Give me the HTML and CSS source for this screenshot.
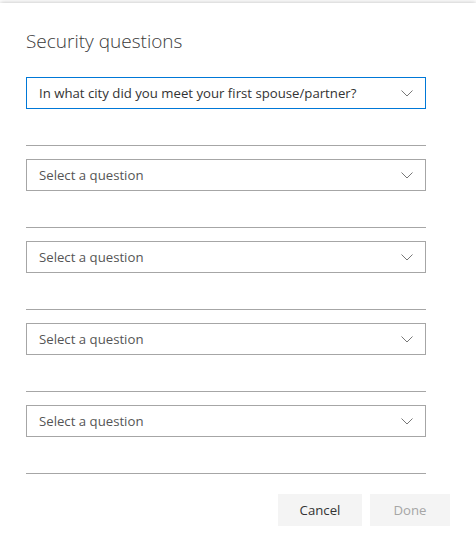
FILE: index.html
```html
<!DOCTYPE html>
<html>
<head>
<meta charset="utf-8">
<link rel="stylesheet" href="styles.css">
</head>
<body>
<div class="dialog">
  <h1 class="title">Security questions</h1>
  <div class="questions">
    <div class="q">
      <div class="select focused">
        <span class="label filled">In what city did you meet your first spouse/partner?</span>
        <svg class="chev" width="12" height="7" viewBox="0 0 12 7"><path d="M0.5 0.5 L6 6 L11.5 0.5" fill="none" stroke="#777" stroke-width="1"/></svg>
      </div>
      <div class="answer"></div>
    </div>
    <div class="q">
      <div class="select">
        <span class="label">Select a question</span>
        <svg class="chev" width="12" height="7" viewBox="0 0 12 7"><path d="M0.5 0.5 L6 6 L11.5 0.5" fill="none" stroke="#777" stroke-width="1"/></svg>
      </div>
      <div class="answer"></div>
    </div>
    <div class="q">
      <div class="select">
        <span class="label">Select a question</span>
        <svg class="chev" width="12" height="7" viewBox="0 0 12 7"><path d="M0.5 0.5 L6 6 L11.5 0.5" fill="none" stroke="#777" stroke-width="1"/></svg>
      </div>
      <div class="answer"></div>
    </div>
    <div class="q">
      <div class="select">
        <span class="label">Select a question</span>
        <svg class="chev" width="12" height="7" viewBox="0 0 12 7"><path d="M0.5 0.5 L6 6 L11.5 0.5" fill="none" stroke="#777" stroke-width="1"/></svg>
      </div>
      <div class="answer"></div>
    </div>
    <div class="q">
      <div class="select">
        <span class="label">Select a question</span>
        <svg class="chev" width="12" height="7" viewBox="0 0 12 7"><path d="M0.5 0.5 L6 6 L11.5 0.5" fill="none" stroke="#777" stroke-width="1"/></svg>
      </div>
      <div class="answer"></div>
    </div>
  </div>
  <div class="actions">
    <button class="btn cancel">Cancel</button>
    <button class="btn done" disabled>Done</button>
  </div>
</div>
</body>
</html>
```
FILE: styles.css
```css
html, body {
  margin: 0;
  padding: 0;
  background: #ffffff;
}
body {
  font-family: "Open Sans", "Liberation Sans", sans-serif;
  color: #333333;
  overflow: hidden;
}
.dialog {
  margin-top: 3px;
  height: 542px;
  background: #ffffff;
  box-shadow: 0 0 5px rgba(0, 0, 0, 0.28);
  box-sizing: border-box;
  padding: 0 26px 0 26px;
  display: flex;
  flex-direction: column;
}
.title {
  margin: 24px 0 0 0;
  font-size: 19px;
  font-weight: 300;
  line-height: 28px;
  color: #3a3a3a;
  height: 28px;
}
.questions {
  margin-top: 22px;
  width: 400px;
  display: flex;
  flex-direction: column;
  gap: 13px;
}
.q {
  display: flex;
  flex-direction: column;
}
.select {
  height: 32px;
  box-sizing: border-box;
  border: 1px solid #a6a6a6;
  display: flex;
  align-items: center;
  justify-content: space-between;
  padding: 0 12px 0 12px;
}
.select.focused {
  border-color: #0078d7;
}
.label {
  font-size: 13.2px;
  color: #555555;
}
.label.filled {
  color: #333333;
}
.chev {
  display: block;
}
.answer {
  margin-top: 36px;
  height: 1px;
  background: #a6a6a6;
}
.actions {
  display: flex;
  justify-content: flex-end;
  gap: 8px;
  margin-top: 20px;
}
.btn {
  height: 32px;
  border: none;
  font-family: "Open Sans", "Liberation Sans", sans-serif;
  font-size: 13.2px;
  padding: 0;
}
.cancel {
  width: 84px;
  background: #f4f4f4;
  color: #333333;
}
.done {
  width: 80px;
  background: #f4f4f4;
  color: #a6a6a6;
}
```
